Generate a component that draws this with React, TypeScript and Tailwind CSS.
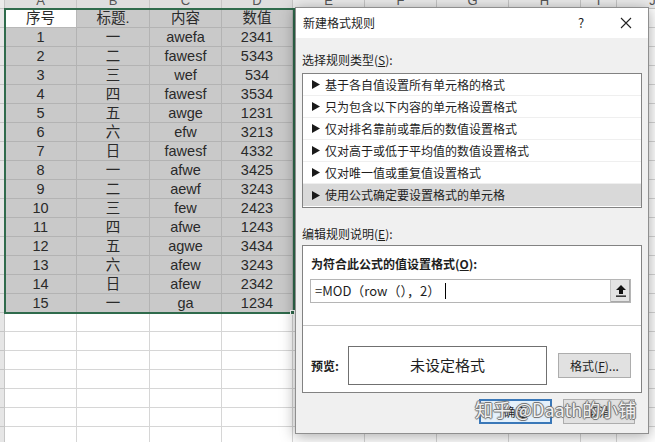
import React from "react";

const colW = [5, 72, 73, 72, 71, 72, 72, 72, 72, 36, 72];
const letters = ["", "A", "B", "C", "D", "E", "F", "G", "H", "I", "J"];

const data: string[][] = [
  ["序号", "标题.", "内容", "数值"],
  ["1", "一", "awefa", "2341"],
  ["2", "二", "fawesf", "5343"],
  ["3", "三", "wef", "534"],
  ["4", "四", "fawesf", "3534"],
  ["5", "五", "awge", "1231"],
  ["6", "六", "efw", "3213"],
  ["7", "日", "fawesf", "4332"],
  ["8", "一", "afwe", "3425"],
  ["9", "二", "aewf", "3243"],
  ["10", "三", "few", "2423"],
  ["11", "四", "afwe", "1243"],
  ["12", "五", "agwe", "3434"],
  ["13", "六", "afew", "3243"],
  ["14", "日", "afew", "2342"],
  ["15", "一", "ga", "1234"],
];

const rules = [
  "基于各自值设置所有单元格的格式",
  "只为包含以下内容的单元格设置格式",
  "仅对排名靠前或靠后的数值设置格式",
  "仅对高于或低于平均值的数值设置格式",
  "仅对唯一值或重复值设置格式",
  "使用公式确定要设置格式的单元格",
];

function Sheet() {
  const rows = Array.from({ length: 23 }, (_, i) => i);
  return (
    <div className="flex flex-col">
      <div className="flex h-[9px]">
        {colW.map((w, c) => (
          <div
            key={c}
            style={{ width: w }}
            className={`flex shrink-0 items-end justify-center overflow-hidden border-r border-b border-[#c6c6c6] text-[13px] leading-[13px] text-[#555] ${
              c >= 1 && c <= 4 ? "bg-[#dedede]" : "bg-[#ececec]"
            }`}
          >
            <span className="pb-[1px]">{letters[c]}</span>
          </div>
        ))}
      </div>
      {rows.map((r) => (
        <div key={r} className="flex h-[19px]">
          {colW.map((w, c) => {
            if (c === 0) {
              return (
                <div
                  key={c}
                  style={{ width: w }}
                  className="shrink-0 border-r border-b border-[#c6c6c6] bg-[#e6e6e6]"
                />
              );
            }
            const sel = r < 16 && c <= 4;
            const active = r === 0 && c === 1;
            const text = sel ? data[r][c - 1] : "";
            return (
              <div
                key={c}
                style={{ width: w }}
                className={`flex shrink-0 items-center justify-center overflow-hidden whitespace-nowrap border-r border-b text-[14.5px] leading-[19px] text-[#2a2a2a] ${
                  active
                    ? "bg-white border-[#b8b8b8]"
                    : sel
                    ? "bg-[#c9c9c9] border-[#b3b3b3]"
                    : "bg-white border-[#d6d6d6]"
                }`}
              >
                <span className="pt-[1px]">{text}</span>
              </div>
            );
          })}
        </div>
      ))}
    </div>
  );
}

function Tri() {
  return (
    <svg width="8" height="9" viewBox="0 0 8 9" className="shrink-0">
      <polygon points="0,0 8,4.5 0,9" fill="#1a1a1a" />
    </svg>
  );
}

function Dialog() {
  return (
    <div className="absolute left-[295px] top-[7px] flex h-[427px] w-[354px] flex-col border border-[#8f8f8f] bg-[#f0f0f0] font-['Noto_Sans_CJK_SC',sans-serif] text-[12px] text-[#1e1e1e] shadow-[0_2px_14px_rgba(0,0,0,0.35)]">
      <div className="flex h-[30px] shrink-0 items-center bg-white pl-[7px] pr-[12px]">
        <span className="leading-[16px]">新建格式规则</span>
        <span className="ml-auto w-[16px] text-center text-[13px] leading-[16px]">?</span>
        <span className="ml-[27px] flex w-[20px] justify-center">
          <svg width="12" height="12" viewBox="0 0 12 12">
            <path d="M1 1 L11 11 M11 1 L1 11" stroke="#222" strokeWidth="1.1" />
          </svg>
        </span>
      </div>
      <div className="flex flex-1 flex-col px-[6px]">
        <div className="mt-[14px] leading-[16px]">
          选择规则类型(<span className="underline">S</span>):
        </div>
        <div className="mt-[5px] flex h-[135px] flex-col border border-[#828282] bg-white">
          {rules.map((t, i) => (
            <div
              key={i}
              className={`flex h-[22px] shrink-0 items-center gap-[5px] pl-[9px] leading-[16px] ${
                i === 5 ? "bg-[#d9d9d9]" : "border-b border-[#efefef]"
              }`}
            >
              <Tri />
              <span>{t}</span>
            </div>
          ))}
        </div>
        <div className="mt-[18px] leading-[16px]">
          编辑规则说明(<span className="underline">E</span>):
        </div>
        <div className="mt-[3px] flex h-[148px] flex-col border border-[#828282] bg-white">
          <div className="px-[8px] pt-[10px] font-bold leading-[16px]">
            为符合此公式的值设置格式(<span className="underline">O</span>):
          </div>
          <div className="ml-[7px] mt-[7px] flex h-[24px] w-[321px] border border-[#b5b5b5] bg-white">
            <div className="flex flex-1 items-center pl-[4px] text-[13px] leading-[16px]">
              <span>=MOD（row（），2）</span>
              <span className="ml-[5px] h-[16px] w-[1px] bg-black" />
            </div>
            <div className="flex w-[20px] items-center justify-center border-l border-[#c4c4c4] bg-[#e3e3e3] shadow-[inset_-1px_-1px_0_#a8a8a8]">
              <svg width="10" height="12" viewBox="0 0 10 12">
                <polygon points="5,0 10,5 7,5 7,9 3,9 3,5 0,5" fill="#111" />
                <rect x="0" y="10.5" width="10" height="1.3" fill="#111" />
              </svg>
            </div>
          </div>
          <div className="mt-[22px] h-[1px] w-full bg-[#c8c8c8]" />
          <div className="mt-[20px] flex items-center pl-[8px]">
            <span className="w-[37px] font-bold leading-[16px]">预览:</span>
            <div className="flex h-[39px] w-[199px] items-center justify-center border border-[#707070] bg-white text-[15px]">
              未设定格式
            </div>
            <div className="ml-[11px] flex h-[25px] w-[73px] items-center justify-center border border-[#adadad] bg-[#e1e1e1] leading-[16px]">
              格式(<span className="underline">F</span>)...
            </div>
          </div>
        </div>
        <div className="mt-[6px] flex justify-end gap-[11px] pr-[7px]">
          <div className="flex h-[25px] w-[73px] items-center justify-center border-2 border-[#3a78b8] bg-[#e5f1fb] leading-[16px]">
            确定
          </div>
          <div className="flex h-[25px] w-[72px] items-center justify-center border border-[#adadad] bg-[#e1e1e1] leading-[16px]">
            取消
          </div>
        </div>
      </div>
      <div className="pointer-events-none absolute left-[179px] top-[391px] whitespace-nowrap text-[18px] leading-[20px] text-white/90 [text-shadow:1px_0_0_#777,-1px_0_0_#777,0_1px_0_#777,0_-1px_0_#777,0_0_2px_#555]">
        知乎 @Daath的小铺
      </div>
    </div>
  );
}

export default function App() {
  return (
    <div className="relative h-[442px] w-[655px] overflow-hidden bg-white font-['Liberation_Sans','Noto_Sans_CJK_SC',sans-serif]">
      <Sheet />
      <div className="absolute left-[4px] top-[8px] h-[306px] w-[291px] border-2 border-[#2f6b4c]" />
      <div className="absolute left-[290px] top-[310px] h-[5px] w-[5px] border border-white bg-[#2f6b4c]" />
      <Dialog />
    </div>
  );
}
